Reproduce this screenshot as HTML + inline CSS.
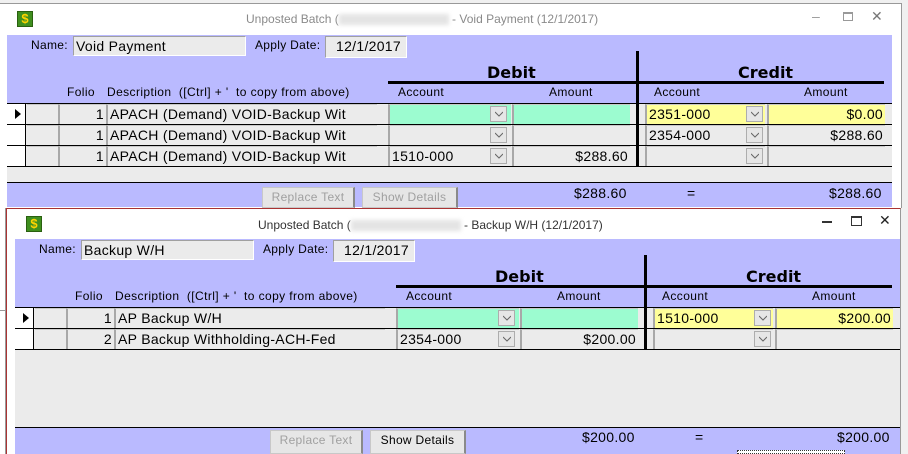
<!DOCTYPE html>
<html><head><meta charset="utf-8"><style>
*{margin:0;padding:0;box-sizing:border-box}
body{width:908px;height:454px;overflow:hidden;background:#f0f0f0;position:relative;font-family:"Liberation Sans",sans-serif;color:#000}
.a{position:absolute}
.win{position:absolute;background:#fff}
.title{position:absolute;top:12px;font-size:12px;color:#8a8a8a;white-space:nowrap}
.blur{display:inline-block;width:110px;height:11px;background:#e4e4e4;filter:blur(2px);vertical-align:middle}
.icon{position:absolute;left:17px;top:11px;width:16px;height:16px;background:#3f8f1f;border:1px solid #2a6010;color:#ffd400;font-weight:bold;font-size:13px;line-height:14px;text-align:center}
.purple{position:absolute;background:#babaff}
.lbl{position:absolute;font-size:12px;letter-spacing:0.3px}
.box{position:absolute;background:#ebebeb;border-top:1px solid #a0a0a0;border-left:1px solid #a0a0a0;border-right:1px solid #fff;border-bottom:1px solid #fff;font-size:14px;padding-left:2px;line-height:18px;letter-spacing:0.3px}
.row{position:absolute;left:7px;width:885px;height:21px;border-top:1px solid #000;background:#ebebeb}
.c{position:absolute;top:0;height:20px;background:#ebebeb;border-left:2px solid #a8a8a8;border-top:1px solid #c8c8c8;font-size:14px;line-height:19px;white-space:nowrap;overflow:hidden;padding:0 2px;letter-spacing:0.3px}
.r{text-align:right}
.sel{position:absolute;left:0;top:0;width:19px;height:20px;background:#fff;border-right:1px solid #000}
.dd{position:absolute;top:2px;width:17px;height:16px;background:#e6e6e6;border:1px solid #adadad}
.dd svg{position:absolute;left:4px;top:4px}
.g{background:#9cfcd0}.y{background:#ffff99}
.hdr{position:absolute;font-size:12px;letter-spacing:0.4px}
.big{position:absolute;font-size:16px;font-weight:bold;font-family:"DejaVu Sans","Liberation Sans",sans-serif}
.btn{position:absolute;height:21px;background:#e6e6e6;border:1px solid #c8c8c8;border-right:2px solid #8a8a8a;font-size:12px;line-height:19px;text-align:center;color:#a0a0a0;letter-spacing:0.3px}
.tot{position:absolute;font-size:14px;letter-spacing:0.3px}
.ctl{position:absolute;font-size:14px;color:#555}
</style></head><body>

<div class="win" style="left:0;top:3px;width:902px;height:205px;border-top:1px solid #999;border-right:1px solid #999"></div>
<div class="a" style="left:0;top:0;width:908px;height:454px">
 <div class="icon">$</div>
 <div class="title" style="left:246px">Unposted Batch (<span class="blur"></span> - Void Payment (12/1/2017)</div>
 <div class="ctl" style="left:812px;top:8px;color:#999">–</div>
 <div class="a" style="left:843px;top:12px;width:10px;height:9px;border:1px solid #999;border-top-width:2px"></div>
 <div class="ctl" style="left:871px;top:8px;color:#777">✕</div>
 <div class="purple" style="left:7px;top:35px;width:885px;height:172px"></div>
 <div class="lbl" style="left:31px;top:38px">Name:</div>
 <div class="box" style="left:73px;top:36px;width:173px;height:20px">Void Payment</div>
 <div class="lbl" style="left:255px;top:38px">Apply Date:</div>
 <div class="box" style="left:325px;top:36px;width:82px;height:22px;padding-left:10px">12/1/2017</div>
 <div class="big" style="left:487px;top:63px">Debit</div>
 <div class="big" style="left:738px;top:63px">Credit</div>
 <div class="a" style="left:388px;top:81px;width:496px;height:3px;background:#000"></div>
 <div class="hdr" style="left:67px;top:85px">Folio</div>
 <div class="hdr" style="left:107px;top:85px">Description&nbsp; ([Ctrl] + '&nbsp; to copy from above)</div>
 <div class="hdr" style="left:398px;top:85px">Account</div>
 <div class="hdr" style="left:549px;top:85px">Amount</div>
 <div class="hdr" style="left:654px;top:85px">Account</div>
 <div class="hdr" style="left:804px;top:85px">Amount</div>

 <div class="row" style="top:103px"><div class="sel"><svg class="a" style="left:8px;top:5px" width="6" height="10"><path d="M0 0L6 5L0 10Z"/></svg></div>
  <div class="c" style="left:20px;width:31px;border-left:0"></div><div class="c r" style="left:51px;width:48px">1</div><div class="c" style="left:99px;width:271px">APACH (Demand) VOID-Backup Wit</div>
  <div class="c g" style="left:381px;width:123px"></div><div class="dd" style="left:483px"><svg width="8" height="6"><path d="M0 1L4 5L8 1" fill="none" stroke="#666"/></svg></div>
  <div class="c g" style="left:505px;width:118px"></div>
  <div class="c y" style="left:638px;width:120px">2351-000</div><div class="dd" style="left:739px"><svg width="8" height="6"><path d="M0 1L4 5L8 1" fill="none" stroke="#666"/></svg></div>
  <div class="c y r" style="left:760px;width:118px">$0.00</div></div>
 <div class="row" style="top:124px"><div class="sel"></div>
  <div class="c" style="left:20px;width:31px;border-left:0"></div><div class="c r" style="left:51px;width:48px">1</div><div class="c" style="left:99px;width:271px">APACH (Demand) VOID-Backup Wit</div>
  <div class="c" style="left:381px;width:123px"></div><div class="dd" style="left:483px"><svg width="8" height="6"><path d="M0 1L4 5L8 1" fill="none" stroke="#666"/></svg></div>
  <div class="c" style="left:505px;width:118px"></div>
  <div class="c" style="left:638px;width:120px">2354-000</div><div class="dd" style="left:739px"><svg width="8" height="6"><path d="M0 1L4 5L8 1" fill="none" stroke="#666"/></svg></div>
  <div class="c r" style="left:760px;width:118px">$288.60</div></div>
 <div class="row" style="top:145px"><div class="sel"></div>
  <div class="c" style="left:20px;width:31px;border-left:0"></div><div class="c r" style="left:51px;width:48px">1</div><div class="c" style="left:99px;width:271px">APACH (Demand) VOID-Backup Wit</div>
  <div class="c" style="left:381px;width:123px">1510-000</div><div class="dd" style="left:483px"><svg width="8" height="6"><path d="M0 1L4 5L8 1" fill="none" stroke="#666"/></svg></div>
  <div class="c r" style="left:505px;width:118px">$288.60</div>
  <div class="c" style="left:638px;width:120px"></div><div class="dd" style="left:739px"><svg width="8" height="6"><path d="M0 1L4 5L8 1" fill="none" stroke="#666"/></svg></div>
  <div class="c" style="left:760px;width:118px"></div></div>
 <div class="a" style="left:7px;top:166px;width:885px;height:17px;background:#ebebeb;border-top:1px solid #000;border-bottom:1px solid #000"></div>
 <div class="a" style="left:636px;top:51px;width:3px;height:116px;background:#000"></div>
 <div class="btn" style="left:262px;top:187px;width:93px">Replace Text</div>
 <div class="btn" style="left:362px;top:187px;width:96px">Show Details</div>
 <div class="tot" style="left:574px;top:185px">$288.60</div>
 <div class="tot" style="left:687px;top:185px">=</div>
 <div class="tot" style="left:829px;top:185px">$288.60</div>
</div>

<div class="a" style="left:0;top:208px;width:6px;height:246px;background:#fff;border-right:1px solid #999"></div>
<div class="a" style="left:0;top:310px;width:5px;height:1px;background:#999"></div>

<div class="win" style="left:6px;top:208px;width:895px;height:246px;border-top:1px solid #a33;border-left:1px solid #a33;border-right:1px solid #999"></div>
<div class="a" style="left:8px;top:204px;width:900px;height:250px">
 <div class="icon" style="left:18px;top:12px">$</div>
 <div class="title" style="left:250px;top:14px;color:#333">Unposted Batch (<span class="blur"></span> - Backup W/H (12/1/2017)</div>
 <div class="a" style="left:814px;top:17px;width:10px;height:2px;background:#333"></div>
 <div class="a" style="left:843px;top:12px;width:11px;height:10px;border:1px solid #333;border-top-width:2px"></div>
 <div class="ctl" style="left:871px;top:8px;color:#222">✕</div>
 <div class="purple" style="left:7px;top:35px;width:885px;height:215px"></div>
 <div class="lbl" style="left:31px;top:38px">Name:</div>
 <div class="box" style="left:73px;top:36px;width:173px;height:20px">Backup W/H</div>
 <div class="lbl" style="left:255px;top:38px">Apply Date:</div>
 <div class="box" style="left:325px;top:36px;width:82px;height:22px;padding-left:10px">12/1/2017</div>
 <div class="big" style="left:487px;top:63px">Debit</div>
 <div class="big" style="left:738px;top:63px">Credit</div>
 <div class="a" style="left:388px;top:81px;width:496px;height:3px;background:#000"></div>
 <div class="hdr" style="left:67px;top:85px">Folio</div>
 <div class="hdr" style="left:107px;top:85px">Description&nbsp; ([Ctrl] + '&nbsp; to copy from above)</div>
 <div class="hdr" style="left:398px;top:85px">Account</div>
 <div class="hdr" style="left:549px;top:85px">Amount</div>
 <div class="hdr" style="left:654px;top:85px">Account</div>
 <div class="hdr" style="left:804px;top:85px">Amount</div>

 <div class="row" style="top:103px"><div class="sel"><svg class="a" style="left:8px;top:5px" width="6" height="10"><path d="M0 0L6 5L0 10Z"/></svg></div>
  <div class="c" style="left:20px;width:31px;border-left:0"></div><div class="c r" style="left:51px;width:48px">1</div><div class="c" style="left:99px;width:271px">AP Backup W/H</div>
  <div class="c g" style="left:381px;width:123px"></div><div class="dd" style="left:483px"><svg width="8" height="6"><path d="M0 1L4 5L8 1" fill="none" stroke="#666"/></svg></div>
  <div class="c g" style="left:505px;width:118px"></div>
  <div class="c y" style="left:638px;width:120px">1510-000</div><div class="dd" style="left:739px"><svg width="8" height="6"><path d="M0 1L4 5L8 1" fill="none" stroke="#666"/></svg></div>
  <div class="c y r" style="left:760px;width:118px">$200.00</div></div>
 <div class="row" style="top:124px"><div class="sel"></div>
  <div class="c" style="left:20px;width:31px;border-left:0"></div><div class="c r" style="left:51px;width:48px">2</div><div class="c" style="left:99px;width:271px">AP Backup Withholding-ACH-Fed</div>
  <div class="c" style="left:381px;width:123px">2354-000</div><div class="dd" style="left:483px"><svg width="8" height="6"><path d="M0 1L4 5L8 1" fill="none" stroke="#666"/></svg></div>
  <div class="c r" style="left:505px;width:118px">$200.00</div>
  <div class="c" style="left:638px;width:120px"></div><div class="dd" style="left:739px"><svg width="8" height="6"><path d="M0 1L4 5L8 1" fill="none" stroke="#666"/></svg></div>
  <div class="c" style="left:760px;width:118px"></div></div>
 <div class="a" style="left:7px;top:145px;width:885px;height:79px;background:#ebebeb;border-top:1px solid #000;border-bottom:1px solid #000"></div>
 <div class="a" style="left:636px;top:51px;width:3px;height:95px;background:#000"></div>
 <div class="btn" style="left:262px;top:226px;width:93px;height:24px">Replace Text</div>
 <div class="btn" style="left:362px;top:226px;width:96px;height:24px;color:#000;background:#e8e8e8">Show Details</div>
 <div class="tot" style="left:574px;top:225px">$200.00</div>
 <div class="tot" style="left:687px;top:225px">=</div>
 <div class="tot" style="left:829px;top:225px">$200.00</div>
 <div class="a" style="left:729px;top:246px;width:108px;height:4px;background:#fff;border:1px dotted #333"></div>
</div>
</body></html>
